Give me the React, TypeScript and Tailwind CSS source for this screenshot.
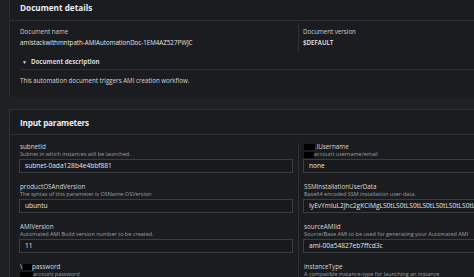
import React from 'react';

type Field = {
  label: React.ReactNode;
  desc: React.ReactNode;
  value?: string;
};

const Redact = ({ w }: { w: string }) => <span className={`inline-block bg-black h-[6px] align-middle ${w}`} />;

function Param({ label, desc, value }: Field) {
  return (
    <div className="h-[40px]">
      <div className="text-[6.3px] leading-[8px] text-[#d5d9dd] whitespace-nowrap pl-[1px]">{label}</div>
      <div className="text-[5.5px] leading-[7px] text-[#9aa0a7] whitespace-nowrap pl-[1px]">{desc}</div>
      {value !== undefined && (
        <div className="mt-[1px] h-[14px] border border-[#3b3d41] bg-[#18191c] pl-[5px] text-[6.6px] leading-[12px] text-[#e4e6e9] whitespace-nowrap overflow-hidden">
          {value}
        </div>
      )}
    </div>
  );
}

const leftFields: Field[] = [
  { label: 'subnetId', desc: 'Subnet in which instances will be launched.', value: 'subnet-0ada128b4e4bbf881' },
  { label: 'productOSAndVersion', desc: 'The syntax of this parameter is OSName-OSVersion', value: 'ubuntu' },
  { label: 'AMIVersion', desc: 'Automated AMI Build version number to be created.', value: '11' },
  {
    label: (
      <span className="flex items-center">
        <span className="w-[3px]">\</span>
        <Redact w="w-[9px]" />
        <span>password</span>
      </span>
    ),
    desc: (
      <span className="flex items-center">
        <Redact w="w-[13px]" />
        <span>account password</span>
      </span>
    ),
  },
];

const rightFields: Field[] = [
  {
    label: (
      <span className="flex items-center">
        <Redact w="w-[11px]" />
        <span>.lUsername</span>
      </span>
    ),
    desc: (
      <span className="flex items-center">
        <Redact w="w-[10px]" />
        <span>account username/email</span>
      </span>
    ),
    value: 'none',
  },
  {
    label: 'SSMInstallationUserData',
    desc: 'Base64 encoded SSM installation user-data.',
    value: 'IyEvYmluL2Jhc2gKCiMgLS0tLS0tLS0tLS0tLS0tLS0tLS0tLS0tLS0tLS0tLS0=',
  },
  { label: 'sourceAMIid', desc: 'Source/Base AMI to be used for generating your Automated AMI', value: 'ami-00a54827eb7ffcd3c' },
  { label: 'instanceType', desc: 'A compatible instance-type for launching an instance' },
];

export default function App() {
  return (
    <div className="w-[474px] h-[277px] overflow-hidden bg-[#1f2023] font-['Open_Sans',sans-serif]">
      <div className="pl-[9px] w-[600px]">
        {/* Document details */}
        <section className="bg-[#1b1c1f] border-l border-[#2a2c30]">
          <div className="h-[21px] border-b border-[#2e3034] pl-[10px] text-[8.2px] leading-[16px] font-bold text-[#eceef0]">
            Document details
          </div>
          <div className="px-[10px] pb-[11px]">
            <div className="mt-[2px] flex">
              <div className="w-[278px] pt-[4px] pb-[5px]">
                <div className="text-[6.2px] leading-[10px] text-[#c9cdd2]">Document name</div>
                <div className="mt-[1px] text-[6.2px] leading-[10px] text-[#e4e6e9]">
                  amistackwithmntpath-AMIAutomationDoc-1EM4AZ527PWJC
                </div>
              </div>
              <div className="border-l border-[#2e3034] pl-[4px] pt-[4px]">
                <div className="text-[6.2px] leading-[10px] text-[#c9cdd2]">Document version</div>
                <div className="mt-[1px] text-[6.2px] leading-[10px] text-[#e4e6e9] font-semibold">$DEFAULT</div>
              </div>
            </div>
            <div className="mt-[4px] h-[13px] border-b border-[#2e3034] flex items-start gap-[4px] pl-[2px] text-[6.2px] leading-[10px] font-bold text-[#d5d9dd]">
              <span className="text-[5px]">▼</span>
              <span>Document description</span>
            </div>
            <div className="mt-[6px] text-[6.2px] leading-[10px] text-[#d5d9dd]">
              This automation document triggers AMI creation workflow.
            </div>
          </div>
        </section>

        {/* Input parameters */}
        <section className="mt-[12px] bg-[#1b1c1f] border-t border-l border-[#2e3034]">
          <div className="h-[25px] border-b border-[#2e3034] pl-[10px] pt-[5px] text-[8.2px] leading-[16px] font-bold text-[#eceef0] tracking-[-0.2px]">
            Input parameters
          </div>
          <div className="flex pl-[9px] pt-[8px]">
            <div className="w-[279px] pr-[5px]">
              {leftFields.map((f, i) => (
                <Param key={i} {...f} />
              ))}
            </div>
            <div className="w-[280px] border-l border-[#2e3034] pl-[4px]">
              {rightFields.map((f, i) => (
                <Param key={i} {...f} />
              ))}
            </div>
          </div>
        </section>
      </div>
    </div>
  );
}
